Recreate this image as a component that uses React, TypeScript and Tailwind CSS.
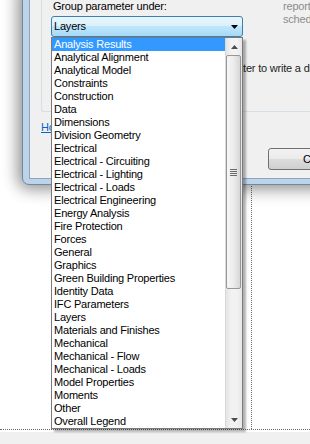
const items = [
  "Analysis Results",
  "Analytical Alignment",
  "Analytical Model",
  "Constraints",
  "Construction",
  "Data",
  "Dimensions",
  "Division Geometry",
  "Electrical",
  "Electrical - Circuiting",
  "Electrical - Lighting",
  "Electrical - Loads",
  "Electrical Engineering",
  "Energy Analysis",
  "Fire Protection",
  "Forces",
  "General",
  "Graphics",
  "Green Building Properties",
  "Identity Data",
  "IFC Parameters",
  "Layers",
  "Materials and Finishes",
  "Mechanical",
  "Mechanical - Flow",
  "Mechanical - Loads",
  "Model Properties",
  "Moments",
  "Other",
  "Overall Legend",
];

function Arrow({ dir, color }: { dir: "up" | "down"; color: string }) {
  return (
    <svg width="7" height="4" viewBox="0 0 7 4" className="block">
      {dir === "down" ? <path d="M0 0H7L3.5 4Z" fill={color} /> : <path d="M0 4H7L3.5 0Z" fill={color} />}
    </svg>
  );
}

function Scrollbar() {
  return (
    <div className="flex w-[17px] shrink-0 flex-col border-l border-[#d9d9d9] bg-[linear-gradient(to_right,#e4e4e4,#f2f2f2_30%,#f2f2f2_70%,#e6e6e6)]">
      <div className="flex h-[17px] items-center justify-center">
        <Arrow dir="up" color="#4d4d4d" />
      </div>
      <div className="flex-1 pr-px">
        <div className="flex h-[234px] items-center justify-center rounded-[2px] border border-[#979797] bg-[linear-gradient(to_right,#f6f6f6,#ececec_50%,#d6d6d6)]">
          <div className="flex flex-col gap-px">
            <div className="h-px w-[7px] bg-[#6a6a6a]" />
            <div className="h-px w-[7px] bg-[#6a6a6a]" />
            <div className="h-px w-[7px] bg-[#6a6a6a]" />
            <div className="h-px w-[7px] bg-[#6a6a6a]" />
          </div>
        </div>
      </div>
      <div className="flex h-[17px] items-center justify-center">
        <Arrow dir="down" color="#4d4d4d" />
      </div>
    </div>
  );
}

export default function App() {
  return (
    <div className="relative h-[444px] w-[310px] overflow-hidden bg-white font-['Liberation_Sans',Arial,sans-serif] text-[11px] leading-[13px] tracking-[-0.2px] text-black">
      {/* page behind the dialog */}
      <div className="h-[430px] border-b border-dotted border-[#6b6b6b]">
        <div className="h-full w-[252px] border-r border-dotted border-[#6b6b6b]" />
      </div>
      <div className="mt-[2px] h-[12px] bg-[#f0f0f0]" />

      {/* dialog window */}
      <div className="absolute left-[22px] top-[-10px] h-[195px] w-[320px] rounded-bl-[7px] border border-[#73889f] bg-[#bcd3ea] shadow-[0_0_16px_4px_rgba(0,0,0,0.45)]">
        <div className="ml-[6px] h-[188px] overflow-hidden border-b border-l border-[#8ea4bc] bg-[#f0f0f0] pt-[9px]">
          <div className="ml-[11px] flex h-[112px] rounded-bl-[3px] border-b border-l border-[#d5dfe5]">
            <div className="flex w-[201px] shrink-0 flex-col pl-[9px]">
              <div className="pl-[2px]">Group parameter under:</div>
              <div className="mt-[3px] flex h-[21px] items-center justify-between rounded-[3px] border border-[#3c7fb1] bg-[linear-gradient(to_bottom,#eaf6fd,#d9f0fc_50%,#bee6fd_50%,#a7d9f5)] pl-[2px] pr-[4px]">
                <span>Layers</span>
                <Arrow dir="down" color="#000" />
              </div>
            </div>
            <div className="flex min-w-0 flex-col">
              <div className="ml-[40px] whitespace-nowrap text-[#8c8c8c]">report</div>
              <div className="ml-[40px] whitespace-nowrap text-[#8c8c8c]">schedules</div>
              <div className="ml-[-13px] mt-[36px] whitespace-nowrap text-[#1e1e1e]">Enter to write a description</div>
            </div>
          </div>
          <div className="ml-[11px] mt-[9px] text-[#0066cc] underline">How do parameters work?</div>
          <div className="ml-[238px] mt-[14px] flex h-[22px] w-[110px] items-center rounded-[3px] border border-[#707070] bg-[linear-gradient(to_bottom,#f2f2f2,#ebebeb_50%,#dddddd_50%,#cfcfcf)] pl-[34px]">
            Cancel
          </div>
        </div>
      </div>

      {/* dropdown list */}
      <div className="absolute left-[51px] top-[37px] flex h-[392px] w-[192px] border border-[#7a7a7a] bg-white shadow-[3px_3px_2px_rgba(0,0,0,0.3)]">
        <div className="min-w-0 flex-1">
          {items.map((it, i) => (
            <div
              key={it}
              className={`h-[13px] whitespace-nowrap pl-[2px] ${i === 0 ? "bg-[#3399ff] text-white" : ""}`}
            >
              {it}
            </div>
          ))}
        </div>
        <Scrollbar />
      </div>
    </div>
  );
}
